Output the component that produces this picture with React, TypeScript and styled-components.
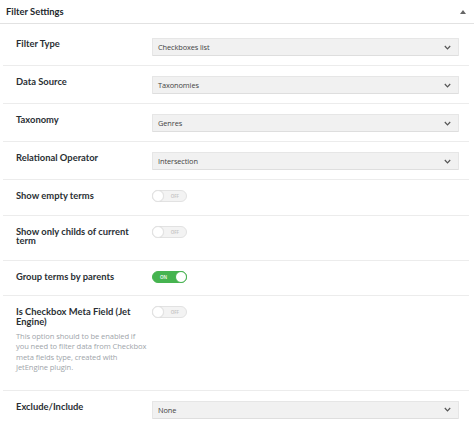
import React from "react";
import styled, { createGlobalStyle } from "styled-components";

const Global = createGlobalStyle`
  html, body { margin: 0; padding: 0; background: #fff; }
  body { font-family: "Open Sans", "Noto Sans", Arial, sans-serif; color: #23282d; }
  * { box-sizing: border-box; }
`;

const Panel = styled.div`
  width: 474px;
  background: #fff;
`;

const Header = styled.div`
  display: flex;
  align-items: center;
  justify-content: space-between;
  height: 24px;
  padding: 0 8px 0 6px;
  border-bottom: 1px solid #e2e2e2;
`;

const Title = styled.h2`
  margin: 0;
  font-family: Lato, "Open Sans", sans-serif;
  font-size: 9.4px;
  font-weight: 700;
  color: #23282d;
`;

const Caret = styled.span`
  width: 0;
  height: 0;
  border-left: 3px solid transparent;
  border-right: 3px solid transparent;
  border-bottom: 4px solid #666;
`;

const Body = styled.div`
  padding: 4px 5px 0 3px;
`;

const Row = styled.div<{ $last?: boolean }>`
  display: grid;
  grid-template-columns: 136px 1fr;
  padding: 10px 10px 9px 13px;
  border-bottom: ${(p) => (p.$last ? "none" : "1px solid #ececec")};
  align-items: start;
`;

const LabelCol = styled.div`
  display: flex;
  flex-direction: column;
  padding-right: 5px;
`;

const Label = styled.div`
  font-family: Lato, "Open Sans", sans-serif;
  font-size: 9.4px;
  font-weight: 700;
  line-height: 9.5px;
  color: #2a2f34;
  padding-top: 1px;
  margin-bottom: 5px;
  padding-right: 12px;
`;

const Desc = styled.div`
  font-size: 7.6px;
  line-height: 10.4px;
  color: #a0a5aa;
  margin-bottom: 8px;
  letter-spacing: -0.1px;
`;

const Select = styled.div`
  display: flex;
  align-items: center;
  justify-content: space-between;
  height: 18px;
  background: #f1f1f1;
  border: 1px solid #e6e6e6;
  border-bottom-color: #dedede;
  border-radius: 1px;
  padding: 0 7px 0 5px;
  font-size: 7.4px;
  color: #444;
  letter-spacing: -0.1px;
`;

const Chevron = () => (
  <svg width="7" height="5" viewBox="0 0 7 5">
    <path d="M0.8 1 L3.5 3.8 L6.2 1" fill="none" stroke="#555" strokeWidth="1.2" />
  </svg>
);

const Track = styled.div<{ $on?: boolean }>`
  position: relative;
  width: 35px;
  height: 12px;
  border-radius: 6px;
  background: ${(p) => (p.$on ? "#46b450" : "#f3f3f3")};
  border: 1px solid ${(p) => (p.$on ? "#46b450" : "#e2e2e2")};
  display: flex;
  align-items: center;
  justify-content: ${(p) => (p.$on ? "flex-start" : "flex-end")};
  padding: ${(p) => (p.$on ? "0 0 0 7px" : "0 7px 0 0")};
  font-size: 4.5px;
  font-weight: 600;
  color: ${(p) => (p.$on ? "#fff" : "#c2c2c2")};
`;

const Knob = styled.span<{ $on?: boolean }>`
  position: absolute;
  top: -1px;
  ${(p) => (p.$on ? "right: -1px;" : "left: -1px;")}
  width: 12px;
  height: 12px;
  border-radius: 50%;
  background: #fff;
  border: 1px solid ${(p) => (p.$on ? "#46b450" : "#e2e2e2")};
  box-shadow: 0 0 1px rgba(0, 0, 0, 0.08);
`;

const Toggle = ({ on }: { on?: boolean }) => (
  <Track $on={on}>
    {on ? "ON" : "OFF"}
    <Knob $on={on} />
  </Track>
);

type Field =
  | { label: string; kind: "select"; value: string }
  | { label: string; kind: "toggle"; on?: boolean; desc?: string };

const fields: Field[] = [
  { label: "Filter Type", kind: "select", value: "Checkboxes list" },
  { label: "Data Source", kind: "select", value: "Taxonomies" },
  { label: "Taxonomy", kind: "select", value: "Genres" },
  { label: "Relational Operator", kind: "select", value: "Intersection" },
  { label: "Show empty terms", kind: "toggle" },
  { label: "Show only childs of current term", kind: "toggle" },
  { label: "Group terms by parents", kind: "toggle", on: true },
  {
    label: "Is Checkbox Meta Field (Jet Engine)",
    kind: "toggle",
    desc: "This option should to be enabled if you need to filter data from Checkbox meta fields type, created with JetEngine plugin.",
  },
  { label: "Exclude/Include", kind: "select", value: "None" },
];

export default function App() {
  return (
    <>
      <Global />
      <Panel>
        <Header>
          <Title>Filter Settings</Title>
          <Caret />
        </Header>
        <Body>
          {fields.map((f, i) => (
            <Row key={f.label} $last={i === fields.length - 1}>
              <LabelCol>
                <Label>{f.label}</Label>
                {f.kind === "toggle" && f.desc && <Desc>{f.desc}</Desc>}
              </LabelCol>
              {f.kind === "select" ? (
                <Select>
                  <span>{f.value}</span>
                  <Chevron />
                </Select>
              ) : (
                <Toggle on={f.on} />
              )}
            </Row>
          ))}
        </Body>
      </Panel>
    </>
  );
}
